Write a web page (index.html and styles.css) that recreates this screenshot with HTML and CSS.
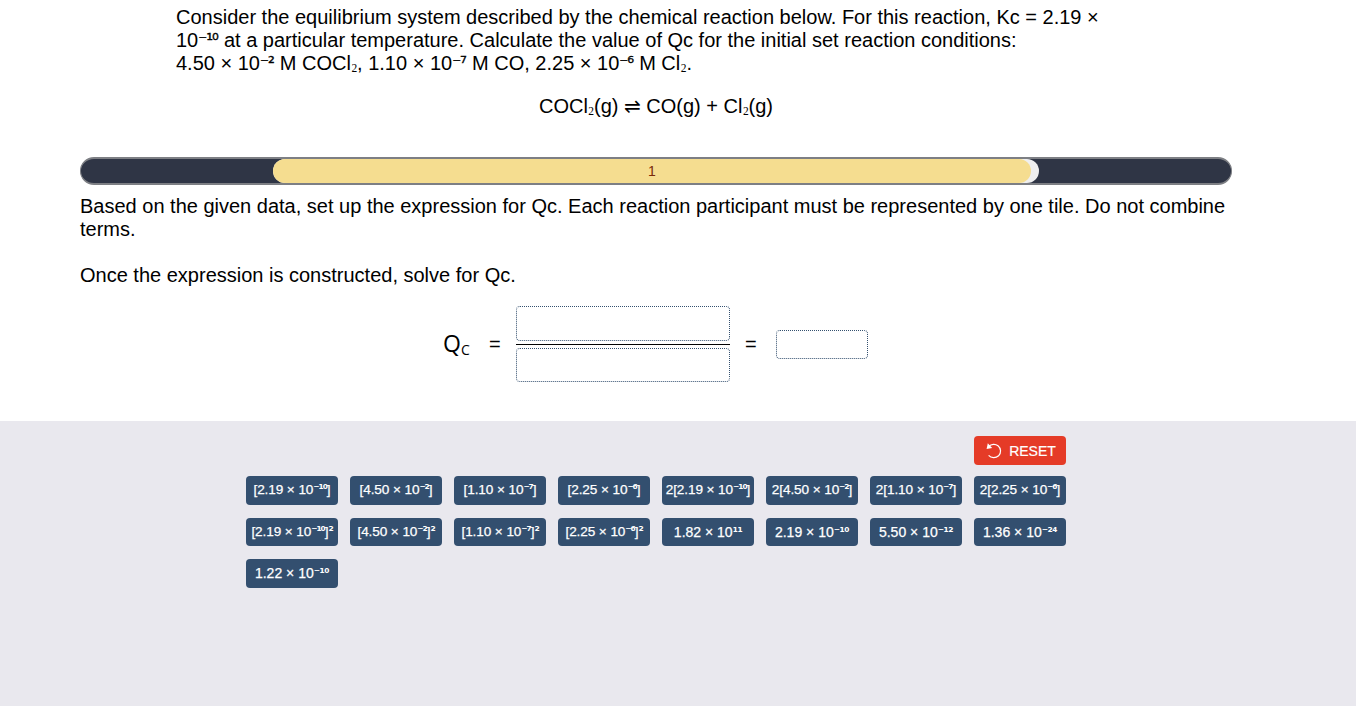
FILE: index.html
```html
<!DOCTYPE html>
<html lang="en">
<head>
<meta charset="utf-8">
<title>Equilibrium</title>
<link rel="stylesheet" href="styles.css">
</head>
<body>
<main class="question">
  <div class="prompt">
    <div class="line l1">Consider the equilibrium system described by the chemical reaction below. For this reaction, Kc = 2.19 ×</div>
    <div class="line l2">10<span class="sup">⁻¹⁰</span> at a particular temperature. Calculate the value of Qc for the initial set reaction conditions:</div>
    <div class="line l3">4.50 × 10<span class="sup">⁻²</span> M COCl<span class="sub">₂</span>, 1.10 × 10<span class="sup">⁻⁷</span> M CO, 2.25 × 10<span class="sup">⁻⁶</span> M Cl<span class="sub">₂</span>.</div>
  </div>
  <div class="reaction">COCl<span class="sub">₂</span>(g) <span class="arrow">⇌</span> CO(g) + Cl<span class="sub">₂</span>(g)</div>
  <div class="progress"><div class="step"><div class="fill">1</div></div></div>
  <div class="instructions">
    <div class="line l4">Based on the given data, set up the expression for Qc. Each reaction participant must be represented by one tile. Do not combine</div>
    <div class="line">terms.</div>
    <div class="line gap">Once the expression is constructed, solve for Qc.</div>
  </div>
  <div class="equation">
    <div class="symbol">Q<span class="symbol-sub">C</span></div>
    <div class="equals eq1">=</div>
    <div class="fraction"><div class="slot top"></div><div class="bar"></div><div class="slot bottom"></div></div>
    <div class="equals eq2">=</div>
    <div class="slot result"></div>
  </div>
</main>
<section class="bank">
  <div class="tools"><button class="reset"><svg class="reset-icon" viewBox="0 0 16 16"><path d="M2.8 3.4C5.2 1 9.3.6 12 2.8C15.2 5.4 15.4 10 12.6 12.8C9.7 15.5 5.2 15.3 2.6 12.4"/><path class="head" d="M.6 6L1.8 .3L6.2 4.9Z"/></svg><span>RESET</span></button></div>
  <div class="tiles">
    <div class="tile"><span>[2.19 × 10<i>⁻¹⁰</i>]</span></div>
    <div class="tile"><span>[4.50 × 10<i>⁻²</i>]</span></div>
    <div class="tile"><span>[1.10 × 10<i>⁻⁷</i>]</span></div>
    <div class="tile"><span>[2.25 × 10<i>⁻⁶</i>]</span></div>
    <div class="tile"><span>2[2.19 × 10<i>⁻¹⁰</i>]</span></div>
    <div class="tile"><span>2[4.50 × 10<i>⁻²</i>]</span></div>
    <div class="tile"><span>2[1.10 × 10<i>⁻⁷</i>]</span></div>
    <div class="tile"><span>2[2.25 × 10<i>⁻⁶</i>]</span></div>
    <div class="tile"><span>[2.19 × 10<i>⁻¹⁰</i>]<i>²</i></span></div>
    <div class="tile"><span>[4.50 × 10<i>⁻²</i>]<i>²</i></span></div>
    <div class="tile"><span>[1.10 × 10<i>⁻⁷</i>]<i>²</i></span></div>
    <div class="tile"><span>[2.25 × 10<i>⁻⁶</i>]<i>²</i></span></div>
    <div class="tile plain"><span>1.82 × 10<i>¹¹</i></span></div>
    <div class="tile plain"><span>2.19 × 10<i>⁻¹⁰</i></span></div>
    <div class="tile plain"><span>5.50 × 10<i>⁻¹²</i></span></div>
    <div class="tile plain"><span>1.36 × 10<i>⁻²⁴</i></span></div>
    <div class="tile plain last"><span>1.22 × 10<i>⁻¹⁰</i></span></div>
  </div>
</section>
</body>
</html>
```
FILE: styles.css
```css
* { box-sizing: border-box; }
body { margin: 0; height: 706px; overflow: hidden; background: #fff; color: #000; font-family: "Liberation Sans", Arial, sans-serif; display: flex; flex-direction: column; }
.question { height: 421px; padding: 6px 124px 0 80px; font-size: 20px; }
.line { line-height: 23px; height: 23px; white-space: nowrap; }
.prompt { padding-left: 96px; }
.sup { font-family: "DejaVu Sans", sans-serif; font-size: 17px; line-height: 0; letter-spacing: -1px; margin-right: .5px; position: relative; top: -1px; -webkit-text-stroke: .35px #000; }
.sub { font-family: "Liberation Serif", serif; font-size: 19px; line-height: 0; letter-spacing: -.5px; position: relative; top: -2px; }
.reaction { margin-top: 20px; line-height: 23px; height: 23px; text-align: center; white-space: nowrap; }
.arrow { font-family: "DejaVu Sans", sans-serif; font-size: 20px; line-height: 0; }
.progress { margin-top: 39px; height: 28px; border-radius: 14px; background: #2f3545; border: 2px solid #7d7f84; border-width: 2px 1px; padding-left: 192px; }
.step { width: 766px; height: 24px; border-radius: 12px; background: #efefef; }
.fill { width: 758px; height: 24px; border-radius: 12px; background: #f5dd90; color: #7a2a08; font-size: 14px; line-height: 25px; text-align: center; }
.instructions { padding-top: 10px; }
.gap { margin-top: 23px; }
.equation { display: flex; align-items: flex-start; padding: 19px 0 0 363px; }
.symbol { width: 46px; padding-top: 21px; font-family: "Open Sans", sans-serif; font-size: 23px; line-height: 33px; white-space: nowrap; }
.symbol-sub { font-size: 14px; position: relative; top: 3px; }
.equals { padding-top: 27px; font-size: 20px; line-height: 23px; }
.eq1 { width: 27px; }
.eq2 { width: 46px; padding-left: 15px; }
.fraction { width: 214px; }
.slot { border: 1px dotted #34506f; border-radius: 4px; }
.top { height: 35px; }
.bar { height: 1px; background: #000; margin: 3px 0; }
.bottom { height: 34px; }
.result { width: 92px; height: 29px; margin-top: 24px; }
.bank { height: 285px; background: #e9e8ee; padding: 15px 290px 0 246px; }
.tools { display: flex; justify-content: flex-end; }
.reset { width: 92px; height: 29px; border: 0; border-radius: 4px; background: #e53b27; color: #fff; font: 14px "Liberation Sans", Arial, sans-serif; padding: 0 0 0 2px; display: flex; align-items: center; justify-content: center; gap: 7px; -webkit-text-stroke: .2px #fff; }
.reset-icon { width: 16px; height: 16px; fill: none; stroke: #fff; stroke-width: 1.2; }
.head { fill: #fff; stroke: none; }
.tiles { display: grid; grid-template-columns: repeat(8, 92px); grid-template-rows: 29px 28px 29px; column-gap: 12px; row-gap: 13px; margin-top: 11px; }
.tile { background: #334f6f; color: #fff; border-radius: 4px; display: flex; align-items: center; justify-content: center; font-size: 13.6px; line-height: 20px; letter-spacing: -.1px; white-space: nowrap; padding-bottom: 1px; -webkit-text-stroke: .25px #fff; }
.tile i { font-style: normal; font-family: "DejaVu Sans", sans-serif; font-size: 12px; font-weight: bold; line-height: 0; letter-spacing: -1.1px; position: relative; top: -1px; -webkit-text-stroke: 0; }
.plain { font-size: 14px; letter-spacing: 0; padding-bottom: 0; }
.plain i { letter-spacing: -.5px; }
.last { padding-bottom: 1px; }
```
